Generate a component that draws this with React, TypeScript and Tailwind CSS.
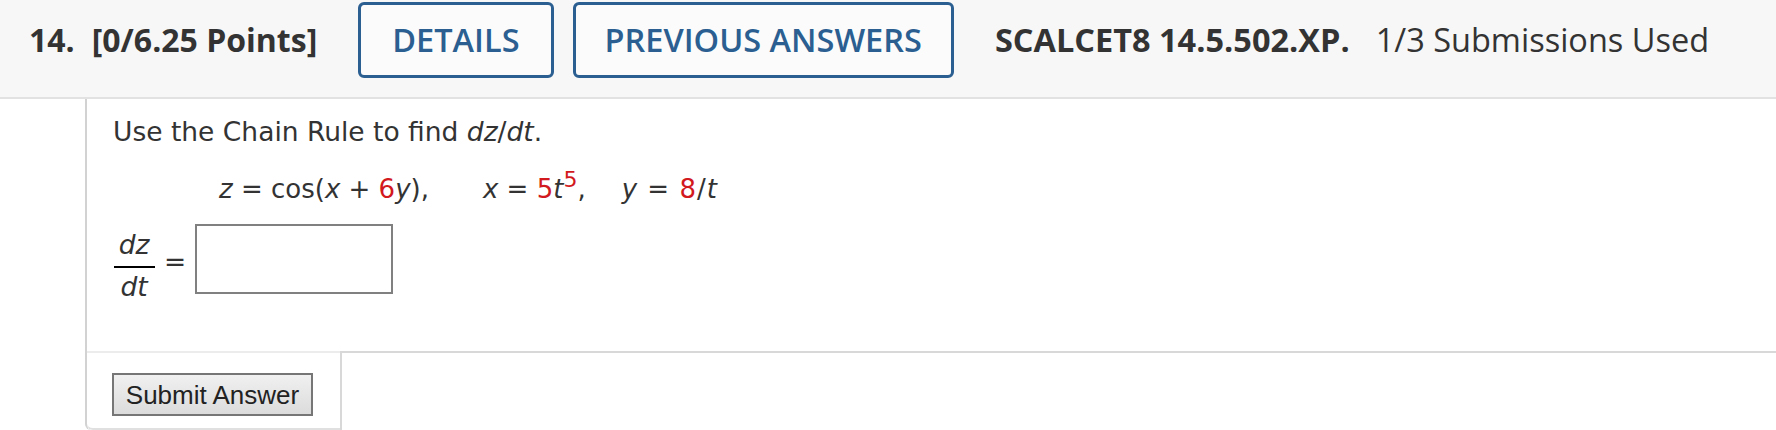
import React from 'react';

const red = 'text-[#d2191d]';

function HeaderButton({ label, pad }: { label: string; pad: string }) {
  return (
    <div
      className={`h-[76px] flex items-center ${pad} border-[3px] border-[#2b5f91] rounded-[6px] bg-[#fbfbfb] text-[#2b5f91] font-semibold text-[32.5px]`}
    >
      {label}
    </div>
  );
}

export default function App() {
  return (
    <div className="w-[1776px] h-[430px] bg-white overflow-hidden text-[#333]">
      <div
        className="h-[99px] bg-[#f7f7f7] border-b-2 border-[#e2e2e2] flex items-start pt-[2px] pl-[29px]"
        style={{ fontFamily: '"Open Sans", sans-serif' }}
      >
        <div className="h-[76px] flex items-center font-bold text-[32px] text-[#333]">
          <span>14.</span>
          <span className="ml-[17px]">[0/6.25 Points]</span>
        </div>
        <div className="ml-[41px]">
          <HeaderButton label="DETAILS" pad="px-[31px]" />
        </div>
        <div className="ml-[19px]">
          <HeaderButton label="PREVIOUS ANSWERS" pad="px-[29px]" />
        </div>
        <div className="h-[76px] flex items-center ml-[41px] text-[32.5px]">
          <span className="font-bold">SCALCET8 14.5.502.XP.</span>
          <span className="ml-[26px] font-normal">1/3 Submissions Used</span>
        </div>
      </div>

      <div className="flex h-[331px]">
        <div className="w-[85px] shrink-0" />
        <div className="flex-1 flex flex-col border-l-2 border-[#d2d2d2] rounded-bl-[6px]">
          <div
            className="pl-[26px] pt-[15px] text-[26.5px] leading-[36px] text-[#333]"
            style={{ fontFamily: '"DejaVu Sans", Verdana, sans-serif' }}
          >
            <p>
              Use the Chain Rule to find <i>dz</i>/<i>dt</i>.
            </p>
            <p className="mt-[21px] pl-[106px] whitespace-pre text-[26px]">
              <i>z</i> = cos(<i>x</i> + <span className={red}>6</span>
              <i>y</i>),<span className="inline-block w-[54px]" />
              <i>x</i> = <span className={red}>5</span>
              <i>t</i>
              <sup className={`${red} text-[22px] relative top-[-11px]`}>5</sup>,
              <span className="inline-block w-[36px]" />
              <i>y</i>
              <span className="mx-[2px]"> = </span>
              <span className={red}>8</span>
              <span className="mx-[1px]">/</span>
              <i>t</i>
            </p>
            <div className="mt-[17px] flex items-start h-[82px]">
              <div className="flex flex-col items-center w-[42px] pt-[3px]">
                <span className="italic leading-[36px]">dz</span>
                <span className="block mt-[3px] w-[41px] h-[2px] bg-black" />
                <span className="italic leading-[38px]">dt</span>
              </div>
              <span className="ml-[9px] mt-[20px]">=</span>
              <div className="ml-[9px] w-[198px] h-[70px] border-2 border-[#808080] bg-white" />
            </div>
          </div>

          <div className="mt-auto flex h-[79px]">
            <div className="w-[253px] border-t-2 border-[#ececec] border-b-2 border-b-[#e0e0e0] rounded-bl-[6px] pl-[25px] pt-[20px]">
              <button
                className="h-[43px] w-[201px] border-2 border-[#767676] bg-gradient-to-b from-[#f0f0f0] to-[#dcdcdc] text-[26px] text-[#222] leading-none"
                style={{ fontFamily: '"Liberation Sans", Arial, sans-serif' }}
              >
                Submit Answer
              </button>
            </div>
            <div className="flex-1 border-t-2 border-l-2 border-[#d8d8d8]" />
          </div>
        </div>
      </div>
    </div>
  );
}
